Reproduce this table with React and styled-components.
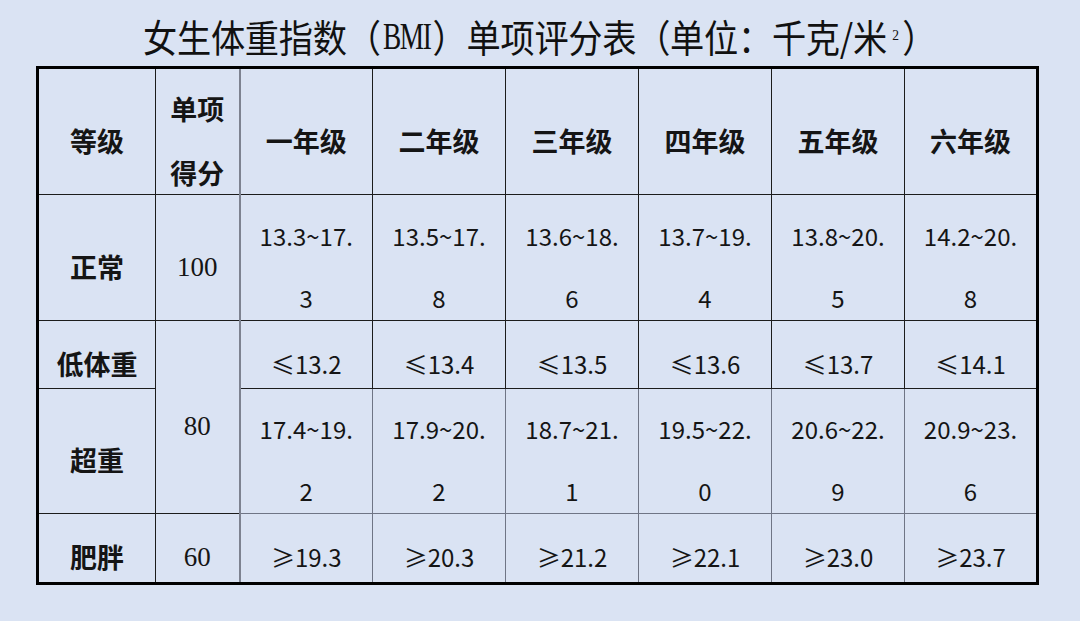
import React from "react"
import styled, { createGlobalStyle } from "styled-components"

const GlobalStyle = createGlobalStyle`
  html, body {
    margin: 0;
    padding: 0;
    background: #dae3f3;
  }
`

const Page = styled.div`
  width: 1080px;
  height: 621px;
  background: #dae3f3;
  display: flex;
  flex-direction: column;
  align-items: center;
  overflow: hidden;
`

const Title = styled.h1`
  margin: 0;
  height: 66px;
  display: flex;
  align-items: center;
  padding-top: 5px;
  box-sizing: border-box;
  font-family: "Noto Sans CJK SC", sans-serif;
  font-weight: 400;
  font-size: 38px;
  color: #111;
  white-space: nowrap;
  transform: scaleX(0.9);
  letter-spacing: -0.3px;

  .latin {
    font-family: "Liberation Serif", serif;
    letter-spacing: -2px;
    transform: scaleX(0.8);
    display: inline-block;
    margin: 0 -4px;
  }

  sup {
    font-family: "Liberation Serif", serif;
    font-size: 15px;
    vertical-align: 24px;
    margin: 0 4px 0 6px;
  }
`

const Table = styled.table`
  width: 1002px;
  table-layout: fixed;
  border-collapse: collapse;
  border: 3px solid #000;
  margin-left: -5px;
`

const Row = styled.tr`
  height: ${p => p.$h}px;
`

const Cell = styled.td`
  border: 1px solid ${p => (p.$soft ? "#6f7585" : "#1c1c1c")};
  ${p => p.$thick && "border-left: 2px solid #7d8290;"}
  padding: 18px 0 0;
  text-align: center;
  vertical-align: middle;
  color: #151515;
  font-family: ${p =>
    p.$kind === "head"
      ? '"Noto Sans CJK SC", sans-serif'
      : p.$kind === "score"
      ? '"Liberation Serif", serif'
      : '"Noto Sans CJK SC", "Noto Sans", sans-serif'};
  font-weight: ${p => (p.$kind === "head" ? 700 : 400)};
  font-size: ${p =>
    p.$kind === "head" ? "27px" : p.$kind === "score" ? "27px" : "24px"};
`

const Lines = styled.div`
  display: flex;
  flex-direction: column;
  align-items: center;
  gap: ${p => p.$gap}px;

  span {
    line-height: 30px;
    height: 30px;
  }
`

const Text = ({ lines, gap = 32 }) => (
  <Lines $gap={gap}>
    {lines.map((l, i) => (
      <span key={i}>{l}</span>
    ))}
  </Lines>
)

const grades = ["一年级", "二年级", "三年级", "四年级", "五年级", "六年级"]

const normal = [
  ["13.3~17.", "3"],
  ["13.5~17.", "8"],
  ["13.6~18.", "6"],
  ["13.7~19.", "4"],
  ["13.8~20.", "5"],
  ["14.2~20.", "8"],
]
const low = ["≤13.2", "≤13.4", "≤13.5", "≤13.6", "≤13.7", "≤14.1"]
const over = [
  ["17.4~19.", "2"],
  ["17.9~20.", "2"],
  ["18.7~21.", "1"],
  ["19.5~22.", "0"],
  ["20.6~22.", "9"],
  ["20.9~23.", "6"],
]
const obese = ["≥19.3", "≥20.3", "≥21.2", "≥22.1", "≥23.0", "≥23.7"]

export default function App() {
  return (
    <Page>
      <GlobalStyle />
      <Title>
        女生体重指数（<span className="latin">BMI</span>）单项评分表（单位：千克/米<sup>2</sup>）
      </Title>
      <Table>
        <colgroup>
          <col style={{ width: 118 }} />
          <col style={{ width: 84 }} />
          {grades.map(g => (
            <col key={g} style={{ width: 133 }} />
          ))}
        </colgroup>
        <tbody>
          <Row $h={127}>
            <Cell $kind="head"><Text lines={["等级"]} /></Cell>
            <Cell $kind="head"><Text lines={["单项", "得分"]} gap={34} /></Cell>
            {grades.map((g, i) => (
              <Cell key={g} $kind="head" $thick={i === 0}>
                <Text lines={[g]} />
              </Cell>
            ))}
          </Row>
          <Row $h={126}>
            <Cell $kind="head"><Text lines={["正常"]} /></Cell>
            <Cell $kind="score"><Text lines={["100"]} /></Cell>
            {normal.map((v, i) => (
              <Cell key={i} $thick={i === 0}><Text lines={v} /></Cell>
            ))}
          </Row>
          <Row $h={68}>
            <Cell $kind="head"><Text lines={["低体重"]} /></Cell>
            <Cell $kind="score" rowSpan={2}><Text lines={["80"]} /></Cell>
            {low.map((v, i) => (
              <Cell key={i} $thick={i === 0}><Text lines={[v]} /></Cell>
            ))}
          </Row>
          <Row $h={125}>
            <Cell $kind="head"><Text lines={["超重"]} /></Cell>
            {over.map((v, i) => (
              <Cell key={i} $soft $thick={i === 0}><Text lines={v} /></Cell>
            ))}
          </Row>
          <Row $h={70}>
            <Cell $kind="head"><Text lines={["肥胖"]} /></Cell>
            <Cell $kind="score"><Text lines={["60"]} /></Cell>
            {obese.map((v, i) => (
              <Cell key={i} $soft $thick={i === 0}><Text lines={[v]} /></Cell>
            ))}
          </Row>
        </tbody>
      </Table>
    </Page>
  )
}
